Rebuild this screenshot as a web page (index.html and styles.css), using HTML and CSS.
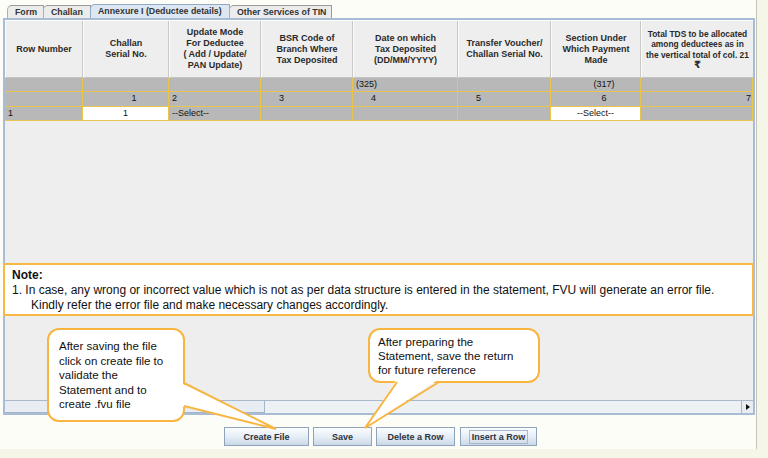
FILE: index.html
```html
<!DOCTYPE html>
<html>
<head>
<meta charset="utf-8">
<link rel="stylesheet" href="styles.css">
</head>
<body>
<div class="screen">
  <div class="window">
    <div class="tabs">
      <div class="tab">Form</div>
      <div class="tab">Challan</div>
      <div class="tab active">Annexure I (Deductee details)</div>
      <div class="tab">Other Services of TIN</div>
    </div>
    <div class="panel">
      <div class="table">
        <div class="grid head">
          <div class="hc"><div>Row Number</div></div>
          <div class="hc"><div>Challan<br>Serial No.</div></div>
          <div class="hc"><div>Update Mode<br>For Deductee<br>( Add / Update/<br>PAN Update)</div></div>
          <div class="hc"><div>BSR Code of<br>Branch Where<br>Tax Deposited</div></div>
          <div class="hc"><div>Date on which<br>Tax Deposited<br>(DD/MM/YYYY)</div></div>
          <div class="hc"><div>Transfer Voucher/<br>Challan Serial No.</div></div>
          <div class="hc"><div>Section Under<br>Which Payment<br>Made</div></div>
          <div class="hc last"><div>Total TDS to be allocated<br>among deductees as in<br>the vertical total of col. 21<br><span class="rupee">₹</span></div></div>
        </div>
        <div class="grid row r1">
          <div class="c"></div>
          <div class="c"></div>
          <div class="c"></div>
          <div class="c"></div>
          <div class="c left">(325)</div>
          <div class="c"></div>
          <div class="c shift">(317)</div>
          <div class="c"></div>
        </div>
        <div class="grid row r2">
          <div class="c"></div>
          <div class="c shift">1</div>
          <div class="c left">2</div>
          <div class="c ind">3</div>
          <div class="c ind">4</div>
          <div class="c ind">5</div>
          <div class="c shift">6</div>
          <div class="c right">7</div>
        </div>
        <div class="grid row r3">
          <div class="c left">1</div>
          <div class="c white">1</div>
          <div class="c left">--Select--</div>
          <div class="c"></div>
          <div class="c"></div>
          <div class="c"></div>
          <div class="c white">--Select--</div>
          <div class="c"></div>
        </div>
      </div>
      <div class="viewport"></div>
      <div class="hscroll">
        <div class="thumb"></div>
        <div class="track"></div>
        <div class="arrow"><span class="tri"></span></div>
      </div>
    </div>
    <div class="buttons">
      <div class="btn w1">Create File</div>
      <div class="btn w2">Save</div>
      <div class="btn w3">Delete a Row</div>
      <div class="btn w4"><span class="focus">Insert a Row</span></div>
    </div>
  </div>

  <div class="note">
    <div class="note-title">Note:</div>
    <div class="note-line">1. In case, any wrong or incorrect value which is not as per data structure is entered in the statement, FVU will generate an error file.</div>
    <div class="note-line indent">Kindly refer the error file and make necessary changes accordingly.</div>
  </div>

  <div class="callout c1">After saving the file<br>click on create file to<br>validate the<br>Statement and to<br>create .fvu file</div>
  <div class="callout c2">After preparing the<br>Statement, save the return<br>for future reference</div>

  <svg class="tails" width="768" height="458" viewBox="0 0 768 458">
    <polygon points="181,383 276,429 181,406" fill="#ffffff"/>
    <polyline points="184,383 276,429 184,406" fill="none" stroke="#f8b540" stroke-width="2" stroke-linejoin="miter"/>
    <polygon points="397,379 365,428 439,379" fill="#ffffff"/>
    <polyline points="397,382 365,428 439,382" fill="none" stroke="#f8b540" stroke-width="2" stroke-linejoin="miter"/>
  </svg>
</div>
</body>
</html>
```

FILE: styles.css
```css
* { box-sizing: border-box; }
html, body { margin: 0; padding: 0; }
body {
  background: #f6f6e8;
  font-family: "Liberation Sans", Arial, sans-serif;
  color: #222;
}
.screen {
  position: relative;
  width: 768px;
  height: 458px;
  overflow: hidden;
  background: #f6f6e8;
}
.window {
  width: 757px;
  height: 449px;
  background: #fdfdf7;
  border-right: 1px solid #c2c2ba;
  display: flex;
  flex-direction: column;
}
.tabs {
  height: 18px;
  padding-left: 7px;
  display: flex;
  align-items: flex-end;
}
.tab {
  height: 13px;
  padding: 0 6px 0 7px;
  border: 1px solid #9a9a9a;
  border-bottom: none;
  border-left-color: #b0b0b0;
  border-top-left-radius: 5px;
  background: #ececec;
  font-size: 8.8px;
  font-weight: bold;
  line-height: 12px;
  color: #333;
  margin-right: -1px;
  white-space: nowrap;
}
.tab:nth-child(1) { width: 37px; }
.tab:nth-child(2) { width: 48px; }
.tab:nth-child(3) { width: 140px; }
.tab:nth-child(4) { width: 103px; }
.tab.active {
  height: 14px;
  background: #dce7f3;
  border-color: #93a9c4;
  line-height: 13px;
}
.panel {
  margin-left: 3px;
  width: 752px;
  height: 397px;
  border: 2px solid #a8bcd5;
  display: flex;
  flex-direction: column;
  overflow: hidden;
  background: #eeeeee;
}
.table { overflow: hidden; }
.grid {
  display: grid;
  grid-template-columns: 78px 86px 92px 92px 105px 93px 90px 112px;
  width: 748px;
}
.head { height: 58px; background: #eeeeee; border-top: 1px solid #ffffff; }
.hc {
  display: flex;
  align-items: center;
  justify-content: center;
  text-align: center;
  font-size: 9px;
  font-weight: bold;
  line-height: 11px;
  color: #2a2a2a;
  white-space: nowrap;
  border-right: 1px solid #c8c8c8;
  border-left: 1px solid #fafafa;
  border-bottom: 1px solid #c4c4c4;
}
.hc.last { border-right: none; font-size: 8.4px; line-height: 10.5px; padding-top: 1px; }
.rupee {
  font-family: "DejaVu Sans", "Noto Sans", sans-serif;
  font-size: 10px;
  font-weight: bold;
  line-height: 10px;
}
.row { background: #b8b8b8; }
.r1 { height: 14px; }
.r2 { height: 15px; }
.r3 { height: 14px; }
.c {
  border-right: 1px solid #e9c54e;
  border-bottom: 1px solid #e9c54e;
  font-size: 9px;
  line-height: 13px;
  color: #111;
  text-align: center;
  white-space: nowrap;
  overflow: hidden;
}
.c.left { text-align: left; padding-left: 3px; }
.c.ind { text-align: left; padding-left: 18px; }
.c.shift { padding-left: 17px; }
.c.right { text-align: right; padding-right: 1px; }
.c.white { background: #ffffff; }
.viewport { flex: 1; background: #eeeeee; }
.hscroll {
  height: 13px;
  display: flex;
  border-top: 1px solid #a9b9cb;
  background: #eef1f4;
}
.thumb {
  width: 260px;
  background: #e7edf3;
  border: 1px solid #a4b6ca;
  border-top: none;
  border-left: none;
}
.track { flex: 1; }
.arrow {
  width: 12px;
  border-left: 1px solid #a4b6ca;
  background: #e9edf1;
  display: flex;
  align-items: center;
  justify-content: center;
}
.tri {
  width: 0;
  height: 0;
  border-top: 3px solid transparent;
  border-bottom: 3px solid transparent;
  border-left: 4px solid #111;
}
.buttons {
  flex: 1;
  display: flex;
  padding-left: 224px;
  padding-top: 12px;
  gap: 4px;
}
.btn {
  height: 19px;
  border: 1px solid #8fa3bb;
  background: linear-gradient(#fbfdff, #e6eef6 50%, #cbd9e8);
  font-size: 9px;
  font-weight: bold;
  color: #2b3340;
  display: flex;
  align-items: center;
  justify-content: center;
}
.w1 { width: 85px; }
.w2 { width: 59px; }
.w3 { width: 79px; margin-right: 1px; }
.w4 { width: 77px; }
.focus {
  border: 1px solid #a9b7c8;
  padding: 1px 2px;
  line-height: 10px;
}
.note {
  position: absolute;
  left: 3px;
  top: 263px;
  width: 751px;
  height: 53px;
  background: #ffffff;
  border: 2px solid #f9b744;
  padding: 3px 0 0 7px;
  font-size: 12px;
  line-height: 15px;
  color: #111;
}
.note-title { font-weight: bold; }
.note-line { white-space: nowrap; }
.note-line.indent { padding-left: 19px; }
.callout {
  position: absolute;
  background: #ffffff;
  border: 2px solid #f8b540;
  border-radius: 12px;
  font-size: 11.5px;
  line-height: 14.5px;
  color: #111;
  white-space: nowrap;
}
.c1 { left: 47px; top: 328px; width: 138px; height: 94px; padding: 9px 0 0 10px; }
.c2 { left: 368px; top: 328px; width: 172px; height: 55px; padding: 5px 0 0 8px; line-height: 14px; }
.tails { position: absolute; left: 0; top: 0; pointer-events: none; }
```
